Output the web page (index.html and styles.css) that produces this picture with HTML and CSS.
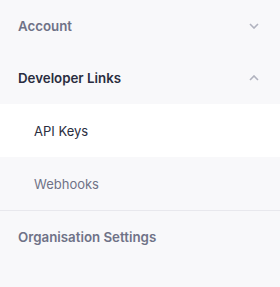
FILE: index.html
```html
<!DOCTYPE html>
<html lang="en">
<head>
    <meta charset="UTF-8">
    <meta name="viewport" content="width=device-width, initial-scale=1.0">
    <title>Settings Menu</title>
    <link rel="stylesheet" href="styles.css">
</head>
<body>

<nav class="side-menu">
    <div class="menu-group">
        <div class="menu-heading">
            <span>Account</span>
            <svg class="chevron" width="10" height="6" viewBox="0 0 10 6"><path d="M1 1l4 4 4-4" fill="none" stroke="currentColor" stroke-width="1.6"/></svg>
        </div>
    </div>
    <div class="menu-group open">
        <div class="menu-heading">
            <span>Developer Links</span>
            <svg class="chevron" width="10" height="6" viewBox="0 0 10 6"><path d="M1 5l4-4 4 4" fill="none" stroke="currentColor" stroke-width="1.6"/></svg>
        </div>
        <a class="menu-item active" href="#">API Keys</a>
        <a class="menu-item" href="#">Webhooks</a>
    </div>
    <div class="menu-group">
        <div class="menu-heading">
            <span>Organisation Settings</span>
        </div>
    </div>
</nav>

</body>
</html>
```

FILE: styles.css
```css
/* Colors Palette */
:root {
    --page-bg: #f8f8fa;
    --white: #ffffff;
    --text-dark: #2a2d40;
    --text-gray: #6f7287;
    --chevron: #b0b2be;
    --divider: #e8e8ed;
}

body {
    font-family: 'Inter', 'Noto Sans', sans-serif;
    margin: 0;
    padding: 0;
    background-color: var(--page-bg);
    color: var(--text-gray);
}

.side-menu {
    width: 280px;
}

.menu-heading {
    display: flex;
    align-items: center;
    justify-content: space-between;
    height: 52px;
    padding: 0 21px 0 18px;
    font-size: 13.3px;
    font-weight: 600;
    color: var(--text-gray);
}

.open .menu-heading {
    color: var(--text-dark);
}

.chevron {
    color: var(--chevron);
}

.open {
    border-bottom: 1px solid var(--divider);
}

.menu-item {
    display: flex;
    align-items: center;
    height: 53px;
    padding-left: 34px;
    font-size: 13px;
    color: var(--text-gray);
    text-decoration: none;
}

.menu-item.active {
    background-color: var(--white);
    color: var(--text-dark);
}
```
